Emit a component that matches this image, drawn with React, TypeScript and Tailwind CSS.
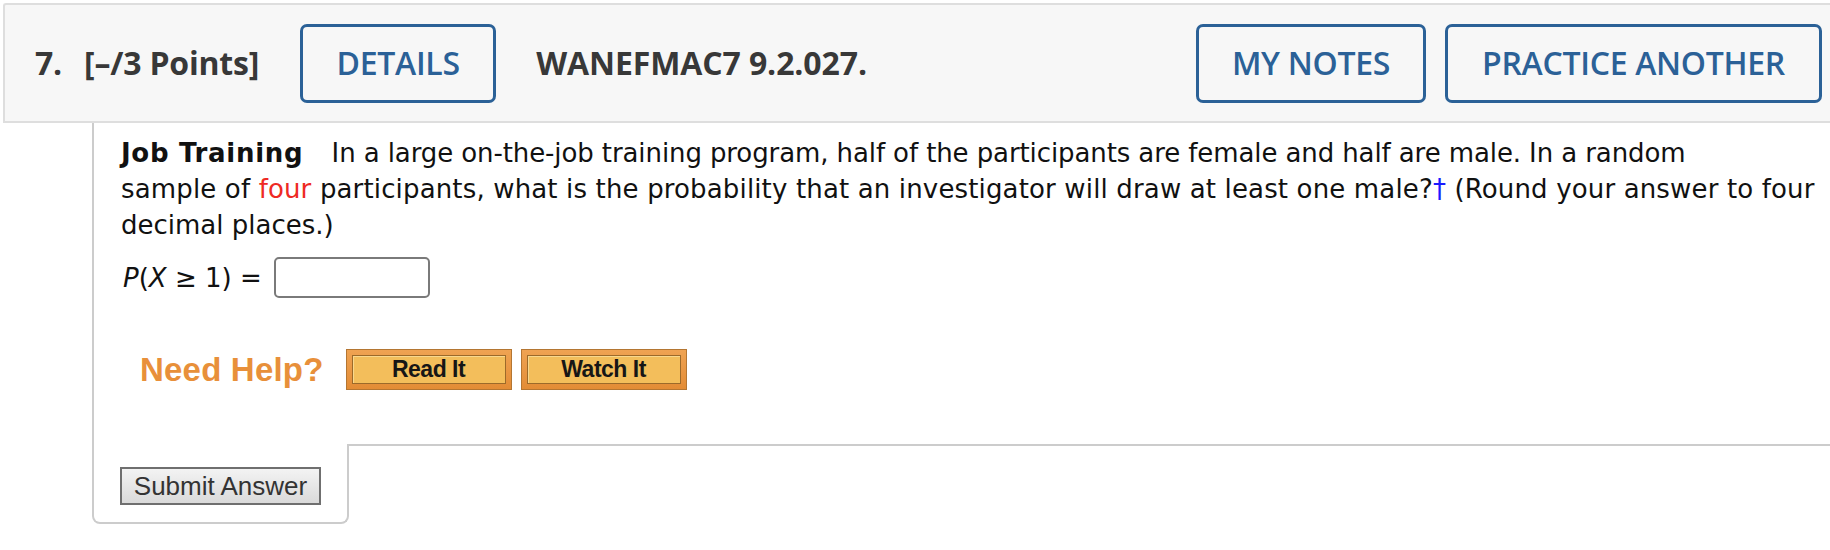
import React from 'react'

// Question card — header bar, prompt, answer box, help buttons, submit row
function HeaderButton({ label, width }: { label: string; width: string }) {
  return (
    <button
      className={`${width} h-[79px] rounded-[7px] border-[3px] border-[#2b6197] bg-[#f7f7f7] text-[32px] font-semibold leading-none tracking-[-0.3px] text-[#2b6197] flex items-center justify-center`}
    >
      {label}
    </button>
  )
}

function HelpButton({ label }: { label: string }) {
  return (
    <div className="w-[166px] h-[41px] border border-[#b47632] bg-gradient-to-b from-[#efa352] to-[#e38c35] p-[5px]">
      <div className="h-full w-full border border-[#9c6a2a] bg-[#f3be5b] shadow-[inset_1px_1px_0_#f9d88e] flex items-center justify-center">
        <span className="font-['Liberation_Sans',Arial,sans-serif] text-[23px] font-bold leading-none tracking-[-0.5px] text-[#161616]">
          {label}
        </span>
      </div>
    </div>
  )
}

export default function App() {
  return (
    <div className="min-h-screen w-[1830px] bg-white pt-[3px] overflow-hidden">
      <div className="ml-[3px] h-[120px] border-2 border-r-0 border-[#dedede] rounded-tl-[3px] bg-[#f7f7f7] flex items-center pl-[30px] pr-[8px] font-['Open_Sans',sans-serif]">
        <span className="text-[32px] font-bold tracking-[-0.2px] text-[#383838]">7.</span>
        <span className="ml-[22px] text-[32px] font-bold tracking-[-0.2px] text-[#383838]">[–/3 Points]</span>
        <div className="ml-[41px]">
          <HeaderButton label="DETAILS" width="w-[196px]" />
        </div>
        <span className="ml-[40px] text-[32px] font-bold tracking-[-0.1px] text-[#383838]">WANEFMAC7 9.2.027.</span>
        <div className="ml-auto flex gap-[19px]">
          <HeaderButton label="MY NOTES" width="w-[230px]" />
          <HeaderButton label="PRACTICE ANOTHER" width="w-[377px]" />
        </div>
      </div>

      <div className="ml-[92px]">
        <div className="h-[321px] border-l-2 border-[#cccccc] pl-[27px] pt-[12px] font-['DejaVu_Sans',Verdana,sans-serif] text-[26px] leading-[36px] text-[#111]">
          <p className="whitespace-nowrap">
            <span className="font-bold tracking-[0.7px] mr-[20px]">Job Training</span>{' '}
            <span className="tracking-[-0.1px]">
              In a large on-the-job training program, half of the participants are female and half are male. In a random
            </span>
            <br />
            <span className="tracking-[0.15px]">
              sample of <span className="text-[#ee2a24]">four</span> participants, what is the probability that an investigator will draw at least one male?
              <span className="text-[#1a1aff]">†</span> (Round your answer to four
            </span>
            <br />
            decimal places.)
          </p>

          <div className="mt-[14px] flex items-center">
            <span className="whitespace-nowrap pl-[2px]">
              <i>P</i>(<i>X</i> ≥ 1) =
            </span>
            <input
              type="text"
              className="ml-[12px] w-[156px] h-[41px] rounded-[5px] border-2 border-[#7a7a7a] bg-white outline-none"
            />
          </div>

          <div className="mt-[51px] ml-[19px] flex items-center">
            <span className="font-['Liberation_Sans',Arial,sans-serif] text-[33px] font-bold tracking-[0.2px] text-[#e8903a] leading-none">
              Need Help?
            </span>
            <div className="ml-[22px] flex gap-[9px]">
              <HelpButton label="Read It" />
              <HelpButton label="Watch It" />
            </div>
          </div>
        </div>

        <div className="flex h-[80px]">
          <div className="w-[257px] border-l-2 border-r-2 border-b-2 border-[#cccccc] rounded-b-[8px] pl-[26px] pt-[23px]">
            <button className="w-[201px] h-[38px] border-2 border-[#6f6f6f] bg-gradient-to-b from-[#f3f3f3] to-[#dadada] font-['Liberation_Sans',Arial,sans-serif] text-[26px] leading-none text-[#333]">
              Submit Answer
            </button>
          </div>
          <div className="flex-1 border-t-2 border-[#cccccc]" />
        </div>
      </div>
    </div>
  )
}
